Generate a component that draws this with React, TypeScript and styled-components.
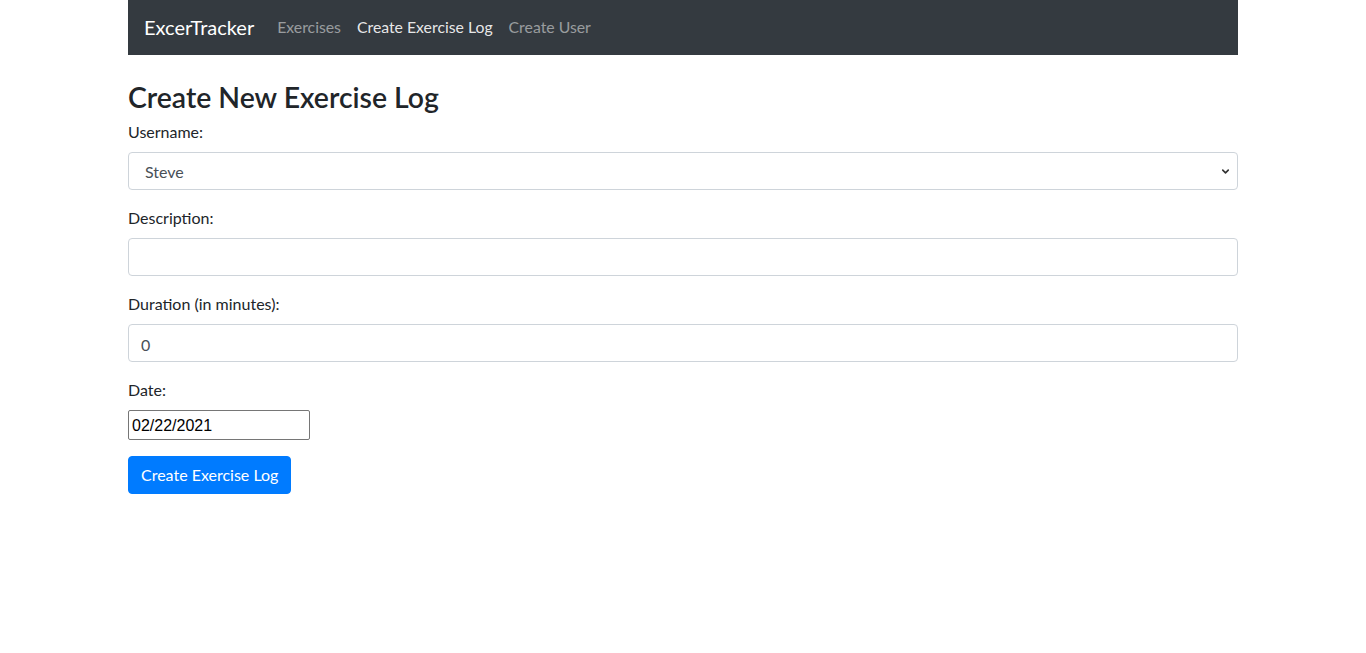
import React from "react";
import styled, { createGlobalStyle } from "styled-components";
import { ChevronDown } from "lucide-react";

const GlobalStyle = createGlobalStyle`
  * { box-sizing: border-box; }
  body {
    margin: 0;
    font-family: Lato, "Segoe UI", "Noto Sans", sans-serif;
    font-size: 16px;
    line-height: 1.5;
    color: #212529;
    background: #fff;
  }
`;

const Container = styled.div`
  width: 1110px;
  margin: 0 auto;
`;

const Navbar = styled.nav`
  display: flex;
  align-items: center;
  height: 55px;
  padding: 0 16px 2px;
  background-color: #343a40;
`;

const Brand = styled.a`
  color: #fff;
  font-size: 20px;
  margin-right: 15px;
  text-decoration: none;
`;

const NavLink = styled.a<{ $active?: boolean }>`
  color: ${(p) => (p.$active ? "rgba(255,255,255,0.9)" : "rgba(255,255,255,0.5)")};
  padding: 8px;
  font-size: 15.8px;
  text-decoration: none;
`;

const Spacer = styled.div`
  height: 23px;
`;

const Title = styled.h3`
  font-size: 28.4px;
  font-weight: 600;
  line-height: 1.2;
  margin: 0 0 6px;
  padding-top: 2px;
`;

const FormGroup = styled.div`
  margin-bottom: 16px;
`;

const Label = styled.label`
  display: block;
  margin-bottom: 8px;
`;

const SelectWrap = styled.div`
  position: relative;
`;

const Select = styled.select`
  display: block;
  width: 100%;
  height: 38px;
  padding: 7px 12px 5px 16px;
  font: inherit;
  color: #495057;
  background: #fff;
  border: 1px solid #ced4da;
  border-radius: 4px;
  appearance: none;
`;

const Arrow = styled(ChevronDown)`
  position: absolute;
  right: 7px;
  top: 14px;
  pointer-events: none;
  color: #333;
`;

const Input = styled.input`
  display: block;
  width: 100%;
  height: 38px;
  padding: 7px 12px 5px;
  font: inherit;
  color: #495057;
  border: 1px solid #ced4da;
  border-radius: 4px;
`;

const DateInput = styled.input`
  display: block;
  width: 182px;
  height: 30px;
  padding: 2px 3px 0;
  font-family: "Liberation Sans", Arial, sans-serif;
  font-size: 16px;
  color: #000;
  border: 1px solid #767676;
  border-radius: 2px;
`;

const Button = styled.button`
  font: inherit;
  color: #fff;
  background-color: #007bff;
  border: 1px solid #007bff;
  border-radius: 4px;
  padding: 6px 12px;
  height: 38px;
`;

export default function App() {
  return (
    <Container>
      <GlobalStyle />
      <Navbar>
        <Brand href="#">ExcerTracker</Brand>
        <NavLink href="#">Exercises</NavLink>
        <NavLink href="#" $active>Create Exercise Log</NavLink>
        <NavLink href="#">Create User</NavLink>
      </Navbar>
      <Spacer />
      <Title>Create New Exercise Log</Title>
      <form onSubmit={(e) => e.preventDefault()}>
        <FormGroup>
          <Label>Username: </Label>
          <SelectWrap>
            <Select defaultValue="Steve">
              <option>Steve</option>
            </Select>
            <Arrow size={11} strokeWidth={3.5} />
          </SelectWrap>
        </FormGroup>
        <FormGroup>
          <Label>Description: </Label>
          <Input type="text" />
        </FormGroup>
        <FormGroup>
          <Label>Duration (in minutes): </Label>
          <Input type="text" defaultValue="0" />
        </FormGroup>
        <FormGroup>
          <Label>Date: </Label>
          <DateInput type="text" defaultValue="02/22/2021" />
        </FormGroup>
        <Button type="submit">Create Exercise Log</Button>
      </form>
    </Container>
  );
}
